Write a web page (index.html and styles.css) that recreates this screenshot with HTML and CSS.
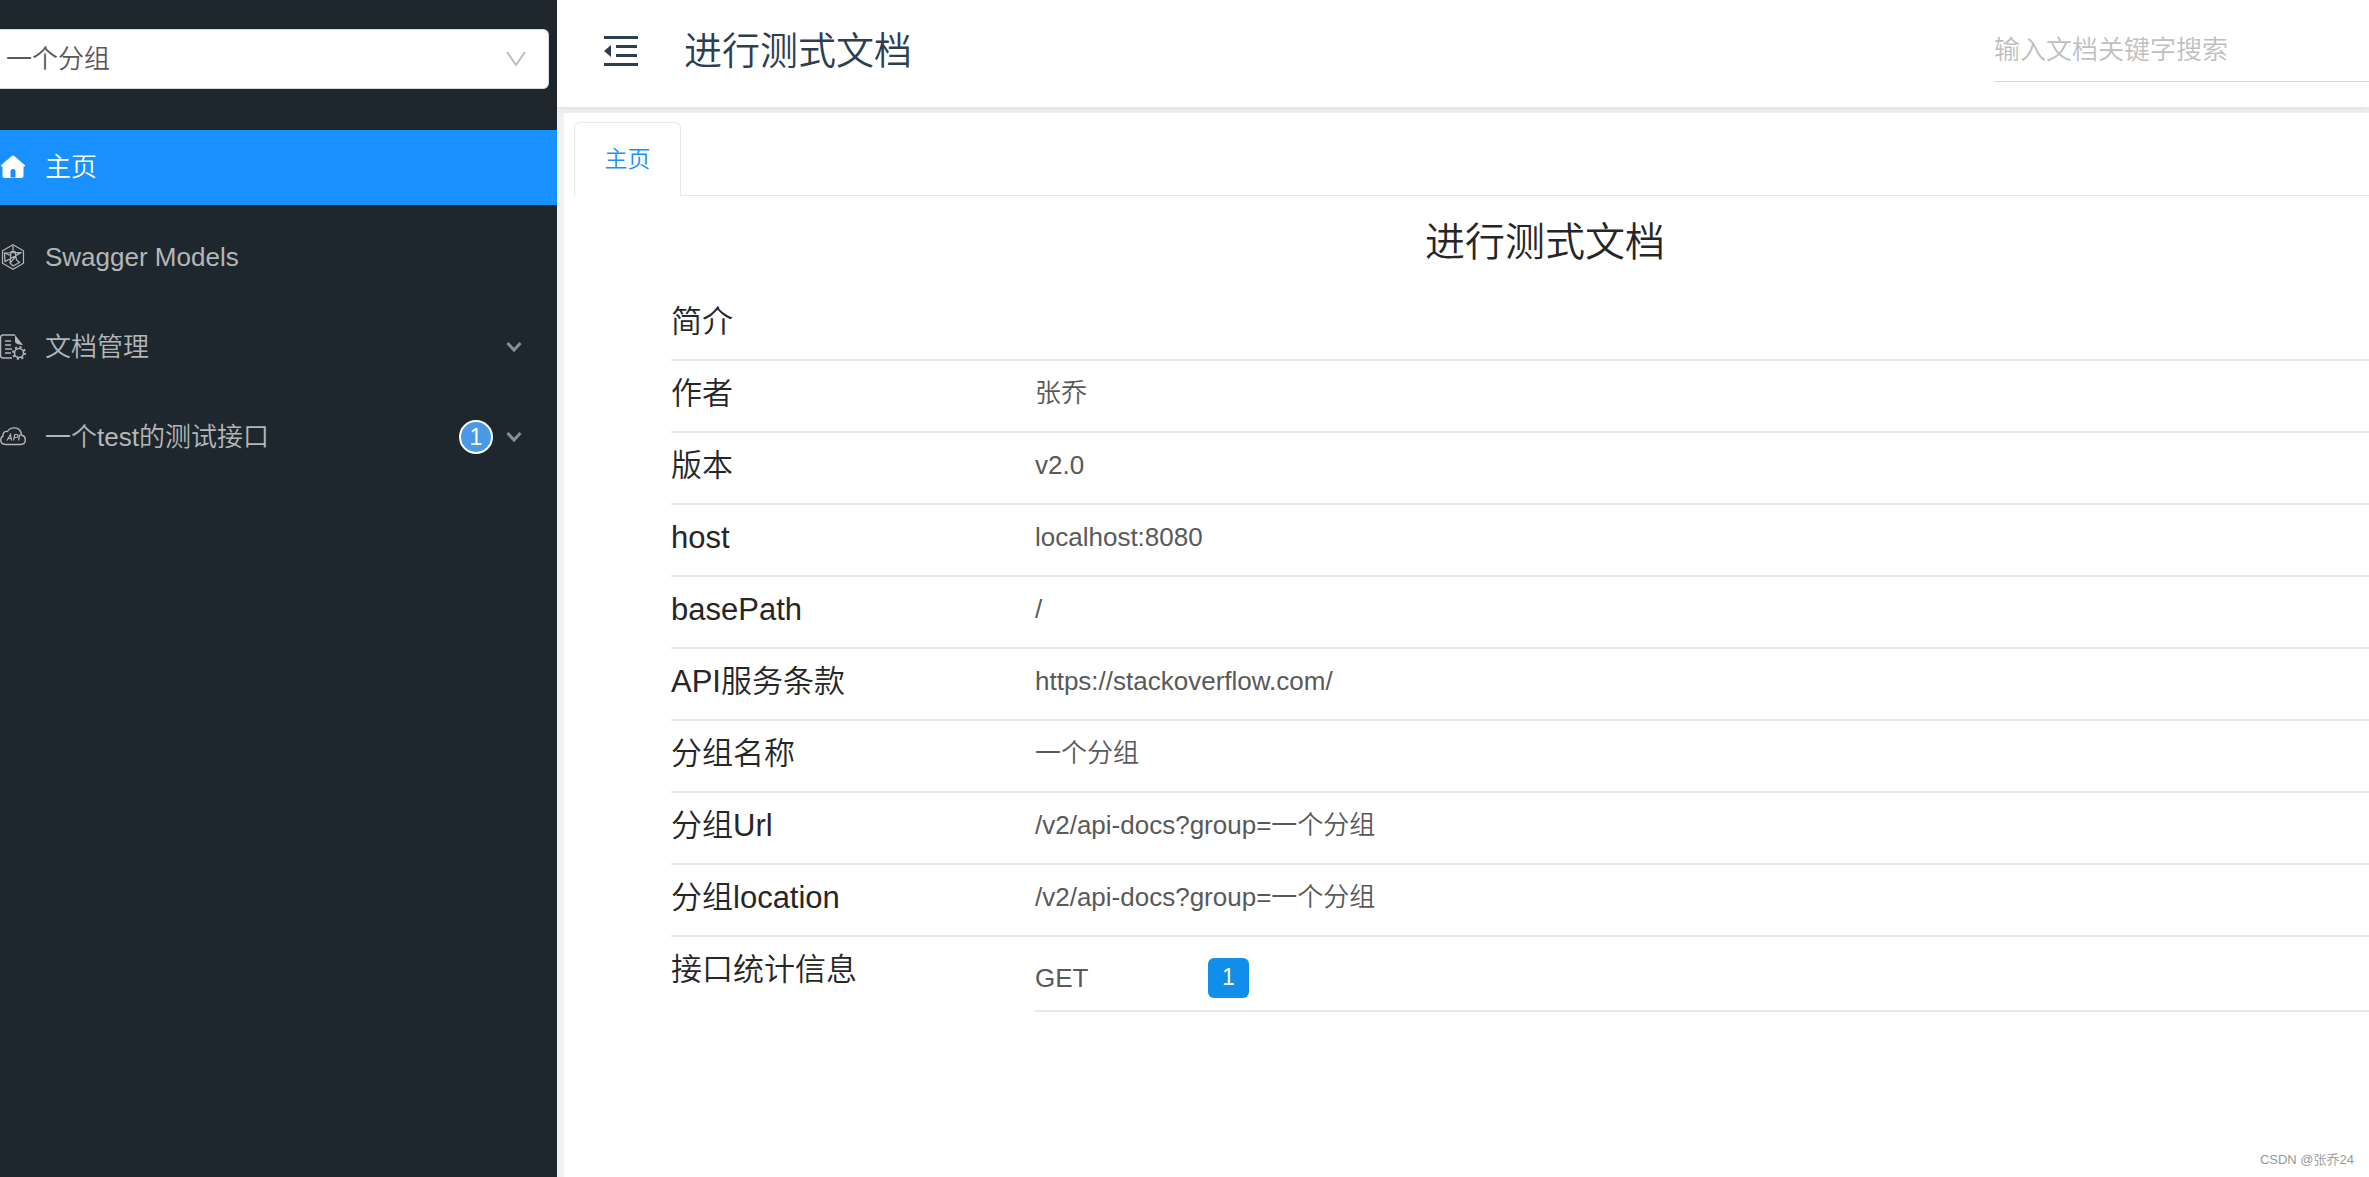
FILE: index.html
```html
<!DOCTYPE html>
<html lang="zh-CN">
<head>
<meta charset="utf-8">
<title>进行测式文档</title>
<link rel="stylesheet" href="styles.css">
</head>
<body>
<div class="app">
  <aside class="sidebar">
    <div class="group-select">
      <select aria-label="分组">
        <option>一个分组</option>
      </select>
      <svg class="select-arrow" viewBox="0 0 20 16" aria-hidden="true"><path d="M1 1l9 13 9-13" fill="none" stroke="currentColor" stroke-width="2"/></svg>
    </div>
    <nav class="menu">
      <a class="menu-item active" href="#home">
        <svg class="menu-icon" viewBox="0 0 26 26" aria-hidden="true"><path fill="currentColor" fill-rule="evenodd" d="M13 1.5c.5 0 .9.2 1.2.5l10.500 9c.8.8.4 1.500-.5 1.500h-.7v9.500c0 1.200-.8 2-2 2h-17c-1.200 0-2-.8-2-2v-9.500h-.7c-.9 0-1.300-.7-.5-1.500l10.500-9c.3-.3.700-.5 1.200-.5zM10.500 23.500h5v-6.500c0-1-.8-2-2.500-2s-2.500 1-2.500 2z"/></svg>
        <span class="menu-text">主页</span>
      </a>
      <a class="menu-item" href="#models">
        <svg class="menu-icon" viewBox="0 0 26 26" fill="none" stroke="currentColor" stroke-width="1.200" aria-hidden="true"><path d="M13 .8l10.500 6v12.400l-10.500 6-10.500-6v-12.400z"/><path d="M13 2v5.500M11 7.500h4l1.500 8.500M11 7.500L10 19M4.500 9l17-.5L5 17.500 4.500 9l6 2.500M16.500 16l3 2.500-6.500 3.500-3-3 9-10.500"/></svg>
        <span class="menu-text">Swagger Models</span>
      </a>
      <button class="menu-item" type="button">
        <svg class="menu-icon" viewBox="0 0 26 26" fill="none" stroke="currentColor" stroke-width="1.500" aria-hidden="true"><path d="M12 24H3a2.500 2.500 0 0 1-2.500-2.500v-18A2.500 2.500 0 0 1 3 1h12M5 7h6M5 11h6M5 15h7M5 19h6"/><path d="M15 1l8 10c-4 0-7-1-8-3z" fill="currentColor" stroke="none"/><circle cx="19" cy="19" r="4.500"/><circle cx="19" cy="19" r="6" stroke-width="2" stroke-dasharray="2 2.700"/></svg>
        <span class="menu-text">文档管理</span>
        <svg class="menu-arrow" viewBox="0 0 16 12" aria-hidden="true"><path d="M1.500 2l6.500 7 6.500-7" fill="none" stroke="currentColor" stroke-width="3"/></svg>
      </button>
      <button class="menu-item" type="button">
        <svg class="menu-icon" viewBox="0 0 26 26" fill="none" stroke="currentColor" stroke-width="1.400" aria-hidden="true"><path d="M6 20.500c-3.500 0-5.300-1.700-5.300-4.500 0-2 .9-3.300 2.300-4-.5-3 1.500-5 4.500-4.500C9 5 11.500 3.800 14.500 3.900c4.500.1 7 3.100 6.700 7.100 2.600.5 4.100 2.300 4.100 5 0 2.800-1.800 4.500-4.800 4.500z"/><path d="M7 16.500l3.500-6 1 6M8.500 14.500h3M13.500 16.500l1.300-6h2c1.700 0 1.500 3-.5 3h-2M18.500 16.500l1.300-6" stroke-width="1.200"/></svg>
        <span class="menu-text">一个test的测试接口</span>
        <span class="menu-count">1</span>
        <svg class="menu-arrow" viewBox="0 0 16 12" aria-hidden="true"><path d="M1.500 2l6.500 7 6.500-7" fill="none" stroke="currentColor" stroke-width="3"/></svg>
      </button>
    </nav>
  </aside>

  <div class="main">
    <header class="header">
      <button class="collapse" type="button" aria-label="收起菜单">
        <svg viewBox="0 0 34 30" aria-hidden="true"><path fill="currentColor" d="M0 0h34v3H0zM12 9h21v3H12zM12 18h21v3H12zM0 27h34v3H0zM0 15l7-6v12z"/></svg>
      </button>
      <span class="header-title">进行测式文档</span>
      <input class="search" type="text" placeholder="输入文档关键字搜索" aria-label="搜索">
    </header>

    <main class="content">
      <div class="tabs">
        <button class="tab" type="button">主页</button>
      </div>
      <h1 class="title">进行测式文档</h1>
      <table class="info">
        <tbody>
          <tr><th scope="row">简介</th><td></td></tr>
          <tr><th scope="row">作者</th><td>张乔</td></tr>
          <tr><th scope="row">版本</th><td>v2.0</td></tr>
          <tr><th scope="row">host</th><td>localhost:8080</td></tr>
          <tr><th scope="row">basePath</th><td>/</td></tr>
          <tr><th scope="row">API服务条款</th><td><a href="#terms">https://stackoverflow.com/</a></td></tr>
          <tr><th scope="row">分组名称</th><td>一个分组</td></tr>
          <tr><th scope="row">分组Url</th><td>/v2/api-docs?group=一个分组</td></tr>
          <tr><th scope="row">分组location</th><td>/v2/api-docs?group=一个分组</td></tr>
          <tr class="stats"><th scope="row">接口统计信息</th><td><div class="stat"><span class="method">GET</span><span class="stat-count">1</span></div></td></tr>
        </tbody>
      </table>
      <footer class="credit">CSDN @张乔24</footer>
    </main>
  </div>
</div>
</body>
</html>
```
FILE: styles.css
```css
* {
  box-sizing: border-box;
}

body {
  margin: 0;
  background: #f0f2f5;
  color: #262626;
  font-family: "Liberation Sans", "Noto Sans CJK SC", sans-serif;
  font-size: 26px;
  font-weight: 350;
}

button,
input,
select {
  margin: 0;
  padding: 0;
  border: 0;
  background: none;
  color: inherit;
  font: inherit;
}

a {
  color: inherit;
  text-decoration: none;
}

.app {
  display: flex;
  min-height: 100vh;
}

/* Sidebar */

.sidebar {
  flex: 0 0 557px;
  padding-top: 29px;
  background: #1f272e;
}

.group-select {
  display: grid;
  align-items: center;
  margin: 0 8px 41px 0;
}

.group-select select {
  grid-area: 1 / 1;
  width: 100%;
  height: 60px;
  padding-left: 6px;
  border: 1px solid #d9d9d9;
  border-left: 0;
  border-radius: 0 6px 6px 0;
  background: #fff;
  color: #595959;
  appearance: none;
}

.select-arrow {
  grid-area: 1 / 1;
  justify-self: end;
  width: 20px;
  height: 16px;
  margin-right: 23px;
  color: #bfbfbf;
  pointer-events: none;
}

.menu {
  display: flex;
  flex-direction: column;
  gap: 15px;
}

.menu-item {
  display: flex;
  align-items: center;
  width: 100%;
  height: 75px;
  padding: 0 35px 2px 0;
  color: #b4b7b9;
  line-height: 38px;
  text-align: left;
}

.menu-item.active {
  background: #1890ff;
  color: #fff;
}

.menu-icon {
  width: 26px;
  height: 26px;
  margin-right: 19px;
}

.menu-text {
  flex: 1;
}

.menu-count {
  width: 34px;
  height: 34px;
  margin-right: 13px;
  border: 2px solid #fff;
  border-radius: 50%;
  background: #4a98e8;
  color: #fff;
  font-size: 23px;
  line-height: 30px;
  text-align: center;
}

.menu-arrow {
  width: 16px;
  height: 12px;
  color: #8a8e91;
}

/* Main column */

.main {
  display: flex;
  flex: 1;
  flex-direction: column;
  min-width: 0;
}

.header {
  display: flex;
  align-items: flex-start;
  height: 107px;
  padding: 19px 0 0 47px;
  background: #fff;
  box-shadow: 0 2px 8px rgba(0, 21, 41, 0.08);
  color: #2c3e50;
}

.collapse {
  height: 64px;
  margin-right: 46px;
}

.collapse svg {
  display: block;
  width: 34px;
  height: 30px;
}

.header-title {
  flex: 1;
  font-size: 38px;
  line-height: 64px;
}

.search {
  width: 375px;
  height: 63px;
  border-bottom: 1px solid #d9d9d9;
}

.search::placeholder {
  color: #bfbfbf;
  opacity: 1;
}

.content {
  position: relative;
  flex: 1;
  margin: 6px 0 0 7px;
  background: #fff;
}

.tabs {
  display: flex;
  height: 83px;
  margin-left: 10px;
  padding-top: 9px;
  border-bottom: 1px solid #e8e8e8;
}

.tab {
  width: 107px;
  height: 74px;
  padding-bottom: 6px;
  border: 1px solid #e8e8e8;
  border-bottom: 0;
  border-radius: 6px 6px 0 0;
  background: #fff;
  color: #1890ff;
  font-size: 23px;
}

.title {
  margin: 16px 0;
  padding-left: 157px;
  font-size: 40px;
  font-weight: 350;
  line-height: 60px;
  text-align: center;
}

.info {
  width: calc(100% - 107px);
  margin-left: 107px;
  border-collapse: collapse;
}

.info th,
.info td {
  height: 72px;
  padding: 0 0 4px;
  border-bottom: 2px solid #e8e8e8;
  line-height: 46px;
  text-align: left;
}

.info th {
  width: 364px;
  font-size: 31px;
  font-weight: 350;
}

.info td {
  padding-bottom: 6px;
  color: #595959;
}

.info .stats th {
  padding-top: 10px;
  border-bottom: 0;
  vertical-align: top;
}

.info .stats td {
  padding: 0;
}

.stat {
  display: flex;
  align-items: center;
  height: 73px;
  padding-top: 8px;
}

.method {
  width: 173px;
}

.stat-count {
  width: 41px;
  height: 40px;
  border-radius: 6px;
  background: #108ee9;
  color: #fff;
  font-size: 23px;
  line-height: 38px;
  text-align: center;
}

.credit {
  position: absolute;
  right: 15px;
  bottom: 7px;
  color: #999;
  font-size: 13px;
  line-height: 20px;
}
```
